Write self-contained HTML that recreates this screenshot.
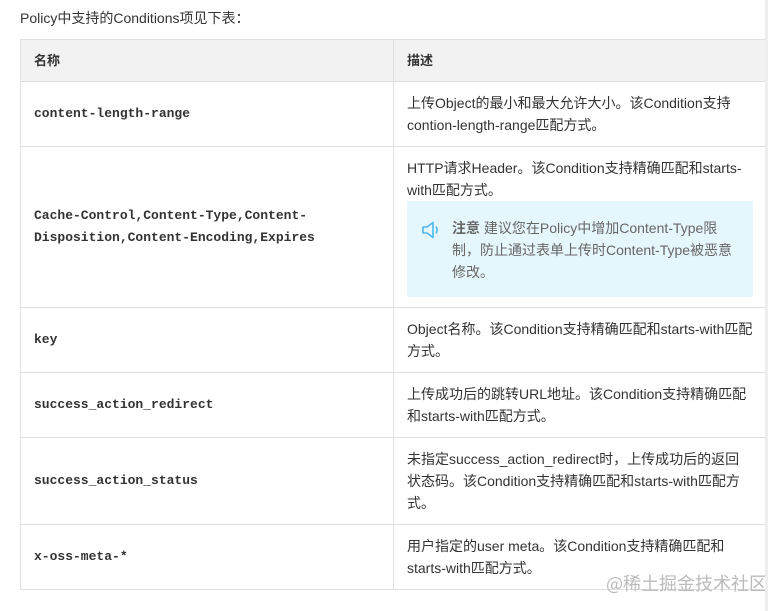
<!DOCTYPE html>
<html><head><meta charset="utf-8"><style>
body{margin:0;background:#fff;width:768px;height:611px;overflow:hidden;font-family:"Liberation Sans","Noto Sans CJK SC",sans-serif;color:#333;font-size:14px;position:relative}
.intro{position:absolute;left:20px;top:7px;line-height:22px}
table{position:absolute;left:20px;top:39px;width:746px;border-collapse:collapse;table-layout:fixed}
td,th{border:1px solid #e0e0e0;padding:0 6px 0 13px;vertical-align:middle;line-height:22px;text-align:left}
th{background:#f2f2f2;height:41px;font-weight:bold;font-size:13px}
td.c{font-family:"Liberation Mono","Noto Sans CJK SC",monospace;font-weight:bold;font-size:13px;color:#333;line-height:22px}
.note{background:#e6f6fd;margin:0 6px 0 0;padding:16px 14px 14px 45px;position:relative;color:#666;line-height:22px}
.note svg{position:absolute;left:14px;top:20px}
.wm{position:absolute;left:606px;top:570px;color:#bbb;font-size:18px;font-family:"Noto Sans CJK SC",sans-serif}
.sb{position:absolute;right:0;top:0;width:3px;height:611px;background:#eee}
</style></head><body>
<div class="intro">Policy中支持的Conditions项见下表：</div>
<table>
<col style="width:373px"><col>
<tr><th>名称</th><th>描述</th></tr>
<tr style="height:65px"><td class="c">content-length-range</td><td>上传Object的最小和最大允许大小。该Condition支持contion-length-range匹配方式。</td></tr>
<tr style="height:161px"><td class="c">Cache-Control,Content-Type,Content-Disposition,Content-Encoding,Expires</td><td style="padding-top:10px;padding-bottom:10px">HTTP请求Header。该Condition支持精确匹配和starts-with匹配方式。<div class="note"><svg width="20" height="18" viewBox="0 0 20 18"><path d="M2 6h4l6-4.5v15L6 12H2z" fill="none" stroke="#4cb7f0" stroke-width="1.6" stroke-linejoin="round"/><path d="M15 5.5q2 3.5 0 7" fill="none" stroke="#4cb7f0" stroke-width="1.6"/></svg><b>注意</b> 建议您在Policy中增加Content-Type限制，防止通过表单上传时Content-Type被恶意修改。</div></td></tr>
<tr style="height:65px"><td class="c">key</td><td>Object名称。该Condition支持精确匹配和starts-with匹配方式。</td></tr>
<tr style="height:65px"><td class="c">success_action_redirect</td><td>上传成功后的跳转URL地址。该Condition支持精确匹配和starts-with匹配方式。</td></tr>
<tr style="height:87px"><td class="c">success_action_status</td><td>未指定success_action_redirect时，上传成功后的返回<br>状态码。该Condition支持精确匹配和starts-with匹配方<br>式。</td></tr>
<tr style="height:65px"><td class="c">x-oss-meta-*</td><td>用户指定的user meta。该Condition支持精确匹配和starts-with匹配方式。</td></tr>
</table>
<div class="wm">@稀土掘金技术社区</div>
<div class="sb"></div>
</body></html>
